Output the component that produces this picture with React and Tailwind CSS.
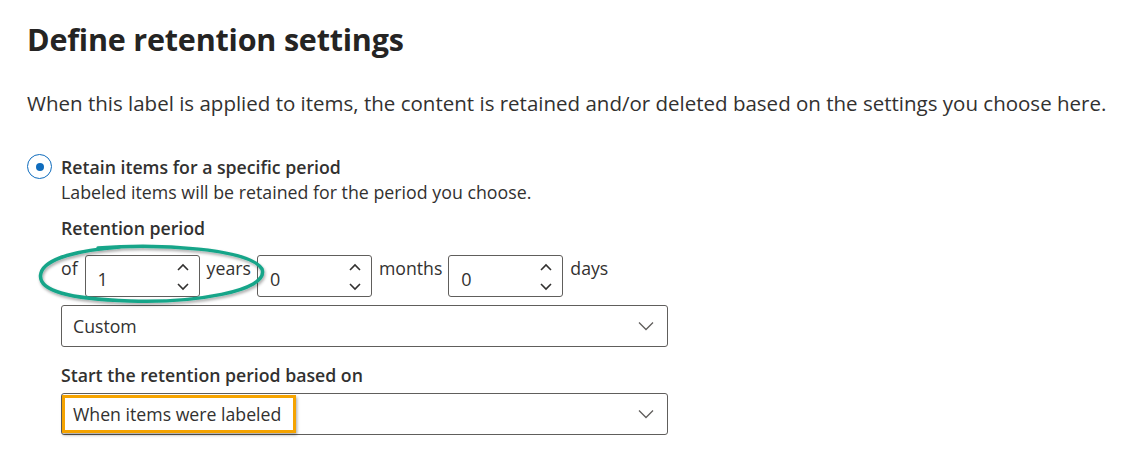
import React from "react";

const font = { fontFamily: '"Open Sans", "Noto Sans", Arial, sans-serif' };

function Chevron({ className = "" }) {
  return (
    <svg width="16" height="10" viewBox="0 0 16 10" className={className}>
      <path d="M1 1.5 L8 8.5 L15 1.5" fill="none" stroke="#605e5c" strokeWidth="1.3" />
    </svg>
  );
}

function SpinInput({ value }) {
  return (
    <div className="relative w-[115px] h-[42px] border border-[#605e5c] rounded-[3px] bg-white">
      <span className="absolute left-[12px] top-[10px] text-[18px] leading-[26px] text-[#323130]">{value}</span>
      <svg width="14" height="9" viewBox="0 0 14 9" className="absolute right-[9px] top-[7px]">
        <path d="M2 7 L7 2 L12 7" fill="none" stroke="#323130" strokeWidth="1.6" />
      </svg>
      <svg width="14" height="9" viewBox="0 0 14 9" className="absolute right-[9px] top-[26px]">
        <path d="M2 2 L7 7 L12 2" fill="none" stroke="#323130" strokeWidth="1.6" />
      </svg>
    </div>
  );
}

function Dropdown({ children }) {
  return (
    <div className="w-[607px] h-[42px] border border-[#605e5c] rounded-[3px] bg-white flex items-center justify-between pl-[11px] pr-[13px]">
      <div className="text-[17.7px] text-[#323130]">{children}</div>
      <Chevron />
    </div>
  );
}

export default function App() {
  return (
    <div className="relative w-[1129px] h-[455px] bg-white overflow-hidden text-[#323130]" style={font}>
      <div className="pl-[27px] pt-[16px]">
        <h1 className="text-[30.5px] font-bold leading-[46px] tracking-[-0.2px] text-[#252423]">
          Define retention settings
        </h1>
        <p className="mt-[27px] text-[20.5px] leading-[28px]">
          When this label is applied to items, the content is retained and/or deleted based on the settings you choose here.
        </p>

        <div className="mt-[37px] flex items-start gap-[9px]">
          <div className="w-[25px] h-[25px] rounded-full border-[1.5px] border-[#0f6cbd] flex items-center justify-center">
            <div className="w-[8px] h-[8px] rounded-full bg-[#0f6cbd]" />
          </div>
          <div>
            <div className="text-[17.7px] font-semibold leading-[26px]">Retain items for a specific period</div>
            <div className="text-[17.8px] leading-[24px]">
              Labeled items will be retained for the period you choose.
            </div>

            <div className="mt-[12px] text-[17.7px] font-semibold leading-[24px]">Retention period</div>

            <div className="mt-[15px] flex items-start gap-[6px]">
              <span className="text-[17.7px] leading-[22px] pt-[2px] pr-[1px]">of</span>
              <SpinInput value="1" />
              <span className="text-[17.7px] leading-[22px] pt-[2px] pl-[1px]">years</span>
              <SpinInput value="0" />
              <span className="text-[17.7px] leading-[22px] pt-[2px] pl-[1px]">months</span>
              <SpinInput value="0" />
              <span className="text-[17.7px] leading-[22px] pt-[2px] pl-[1px]">days</span>
            </div>

            <div className="mt-[8px]">
              <Dropdown>Custom</Dropdown>
            </div>

            <div className="mt-[17px] text-[17.7px] font-semibold leading-[22px]">
              Start the retention period based on
            </div>

            <div className="mt-[7px]">
              <Dropdown>
                <span className="inline-block border-[3px] border-[#f5a300] pl-[8px] pr-[12px] -ml-[11px] py-[3px] shadow-[1px_2px_3px_rgba(0,0,0,0.35)]">
                  When items were labeled
                </span>
              </Dropdown>
            </div>
          </div>
        </div>
      </div>

      <svg
        className="absolute left-0 top-0 pointer-events-none"
        width="1129"
        height="455"
        viewBox="0 0 1129 455"
      >
        <defs>
          <filter id="sh" x="-10%" y="-30%" width="120%" height="160%">
            <feDropShadow dx="1" dy="2" stdDeviation="1.5" floodColor="#000" floodOpacity="0.35" />
          </filter>
        </defs>
        <path
          d="M98 248 C160 243 250 249 262 269 C270 292 190 303 130 301 C70 299 36 291 41 273 C45 258 80 250 120 247"
          fill="none"
          stroke="#17a589"
          strokeWidth="3.5"
          strokeLinecap="round"
          filter="url(#sh)"
        />
      </svg>
    </div>
  );
}
